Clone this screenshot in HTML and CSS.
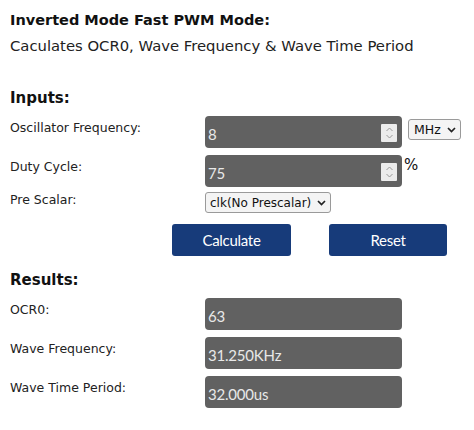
FILE: index.html
```html
<!DOCTYPE html>
<html>
<head>
<meta charset="utf-8">
<link rel="stylesheet" href="styles.css">
</head>
<body>
<div class="page">
  <h2 class="title">Inverted Mode Fast PWM Mode:</h2>
  <p class="subtitle">Caculates OCR0, Wave Frequency &amp; Wave Time Period</p>

  <h3 class="section inputs-head">Inputs:</h3>
  <div class="form">
    <div class="label">Oscillator Frequency:</div>
    <div class="field">
      <div class="box">
        <input class="box-input" type="text" value="8">
        <span class="spin"><svg width="9" height="14" viewBox="0 0 9 14"><path d="M1.5 5 L4.5 2 L7.5 5" fill="none" stroke="#9a9a9a" stroke-width="1"/><path d="M1.5 9 L4.5 12 L7.5 9" fill="none" stroke="#9a9a9a" stroke-width="1"/></svg></span>
      </div>
      <div class="select select-unit"><span class="select-text">MHz</span><svg class="chev" width="9" height="6" viewBox="0 0 9 6"><path d="M1 1 L4.5 4.5 L8 1" fill="none" stroke="#222" stroke-width="1.7"/></svg></div>
    </div>

    <div class="label">Duty Cycle:</div>
    <div class="field">
      <div class="box">
        <input class="box-input" type="text" value="75">
        <span class="spin"><svg width="9" height="14" viewBox="0 0 9 14"><path d="M1.5 5 L4.5 2 L7.5 5" fill="none" stroke="#9a9a9a" stroke-width="1"/><path d="M1.5 9 L4.5 12 L7.5 9" fill="none" stroke="#9a9a9a" stroke-width="1"/></svg></span>
      </div>
      <span class="pct">%</span>
    </div>

    <div class="label label-select">Pre Scalar:</div>
    <div class="field field-select">
      <div class="select select-pre"><span class="select-text">clk(No Prescalar)</span><svg class="chev" width="9" height="6" viewBox="0 0 9 6"><path d="M1 1 L4.5 4.5 L8 1" fill="none" stroke="#222" stroke-width="1.7"/></svg></div>
    </div>
  </div>

  <div class="buttons">
    <button class="btn btn-calc">Calculate</button>
    <button class="btn btn-reset">Reset</button>
  </div>

  <h3 class="section results-head">Results:</h3>
  <div class="form results">
    <div class="label">OCR0:</div>
    <div class="field"><div class="box out">63</div></div>
    <div class="label">Wave Frequency:</div>
    <div class="field"><div class="box out">31.250KHz</div></div>
    <div class="label">Wave Time Period:</div>
    <div class="field"><div class="box out">32.000us</div></div>
  </div>
</div>
</body>
</html>
```

FILE: styles.css
```css
html, body {
  margin: 0;
  padding: 0;
  background: #ffffff;
}

.page {
  padding: 10px 10px 0 10px;
  font-family: "DejaVu Sans", Verdana, sans-serif;
  color: #1a1a1a;
}

.title {
  margin: 0;
  font-size: 14.5px;
  line-height: 20px;
  font-weight: bold;
  color: #111;
}

.subtitle {
  margin: 6px 0 0 0;
  font-size: 14.8px;
  line-height: 20px;
  color: #222;
}

.section {
  margin: 0;
  font-size: 15px;
  line-height: 20px;
  font-weight: bold;
  color: #111;
}

.inputs-head {
  margin-top: 32px;
}

.results-head {
  margin-top: 14px;
}

.form {
  display: grid;
  grid-template-columns: 195px 1fr;
  row-gap: 7px;
  margin-top: 8px;
  align-items: start;
}

.label {
  font-size: 12.5px;
  line-height: 16px;
  padding-top: 4px;
  color: #222;
}

.label-select {
  padding-top: 0;
  margin-top: -2px;
}

.field {
  display: flex;
  align-items: flex-start;
  gap: 6px;
}

.field-select {
  margin-top: -2px;
}

.box {
  width: 197px;
  height: 32px;
  box-sizing: border-box;
  background: #616161;
  border-radius: 4px;
  display: flex;
  align-items: center;
  padding: 0 5px 0 3px;
  flex-shrink: 0;
}

.box-input {
  flex: 1;
  min-width: 0;
  border: none;
  background: transparent;
  outline: none;
  color: #e8e8e8;
  font-family: Lato, "Open Sans", sans-serif;
  font-size: 15px;
  letter-spacing: -0.2px;
  padding: 4px 0 0 0;
  margin: 0;
}

.spin {
  width: 16px;
  height: 18px;
  background: #ececec;
  border-radius: 1px;
  display: flex;
  align-items: center;
  justify-content: center;
  margin-top: 2px;
}

.out {
  color: #e8e8e8;
  font-family: Lato, "Open Sans", sans-serif;
  font-size: 15px;
  letter-spacing: -0.2px;
  padding-top: 4px;
}

.select {
  box-sizing: border-box;
  height: 21px;
  border: 1px solid #9a9a9a;
  border-radius: 3px;
  background: #f4f4f4;
  display: flex;
  align-items: center;
  justify-content: space-between;
  padding: 0 6px 0 5px;
  font-size: 12.5px;
  color: #111;
  white-space: nowrap;
  flex-shrink: 0;
}

.select-text {
  white-space: nowrap;
}

.chev {
  flex-shrink: 0;
  margin-left: 6px;
}

.select-unit {
  width: 53px;
  margin-top: 3px;
}

.select-pre {
  width: 126px;
  padding-left: 4px;
  padding-right: 7px;
  font-size: 12px;
}

.pct {
  font-size: 15px;
  line-height: 16px;
  margin-top: 2px;
  margin-left: -4px;
  color: #111;
}

.buttons {
  display: flex;
  gap: 38px;
  margin-top: 11px;
  padding-left: 162px;
}

.btn {
  height: 32px;
  border: none;
  border-radius: 3px;
  background: #173b7a;
  color: #ffffff;
  font-family: Lato, "Open Sans", sans-serif;
  font-size: 15px;
  letter-spacing: -0.3px;
  padding: 0;
}

.btn-calc {
  width: 119px;
}

.btn-reset {
  width: 118px;
}
```
